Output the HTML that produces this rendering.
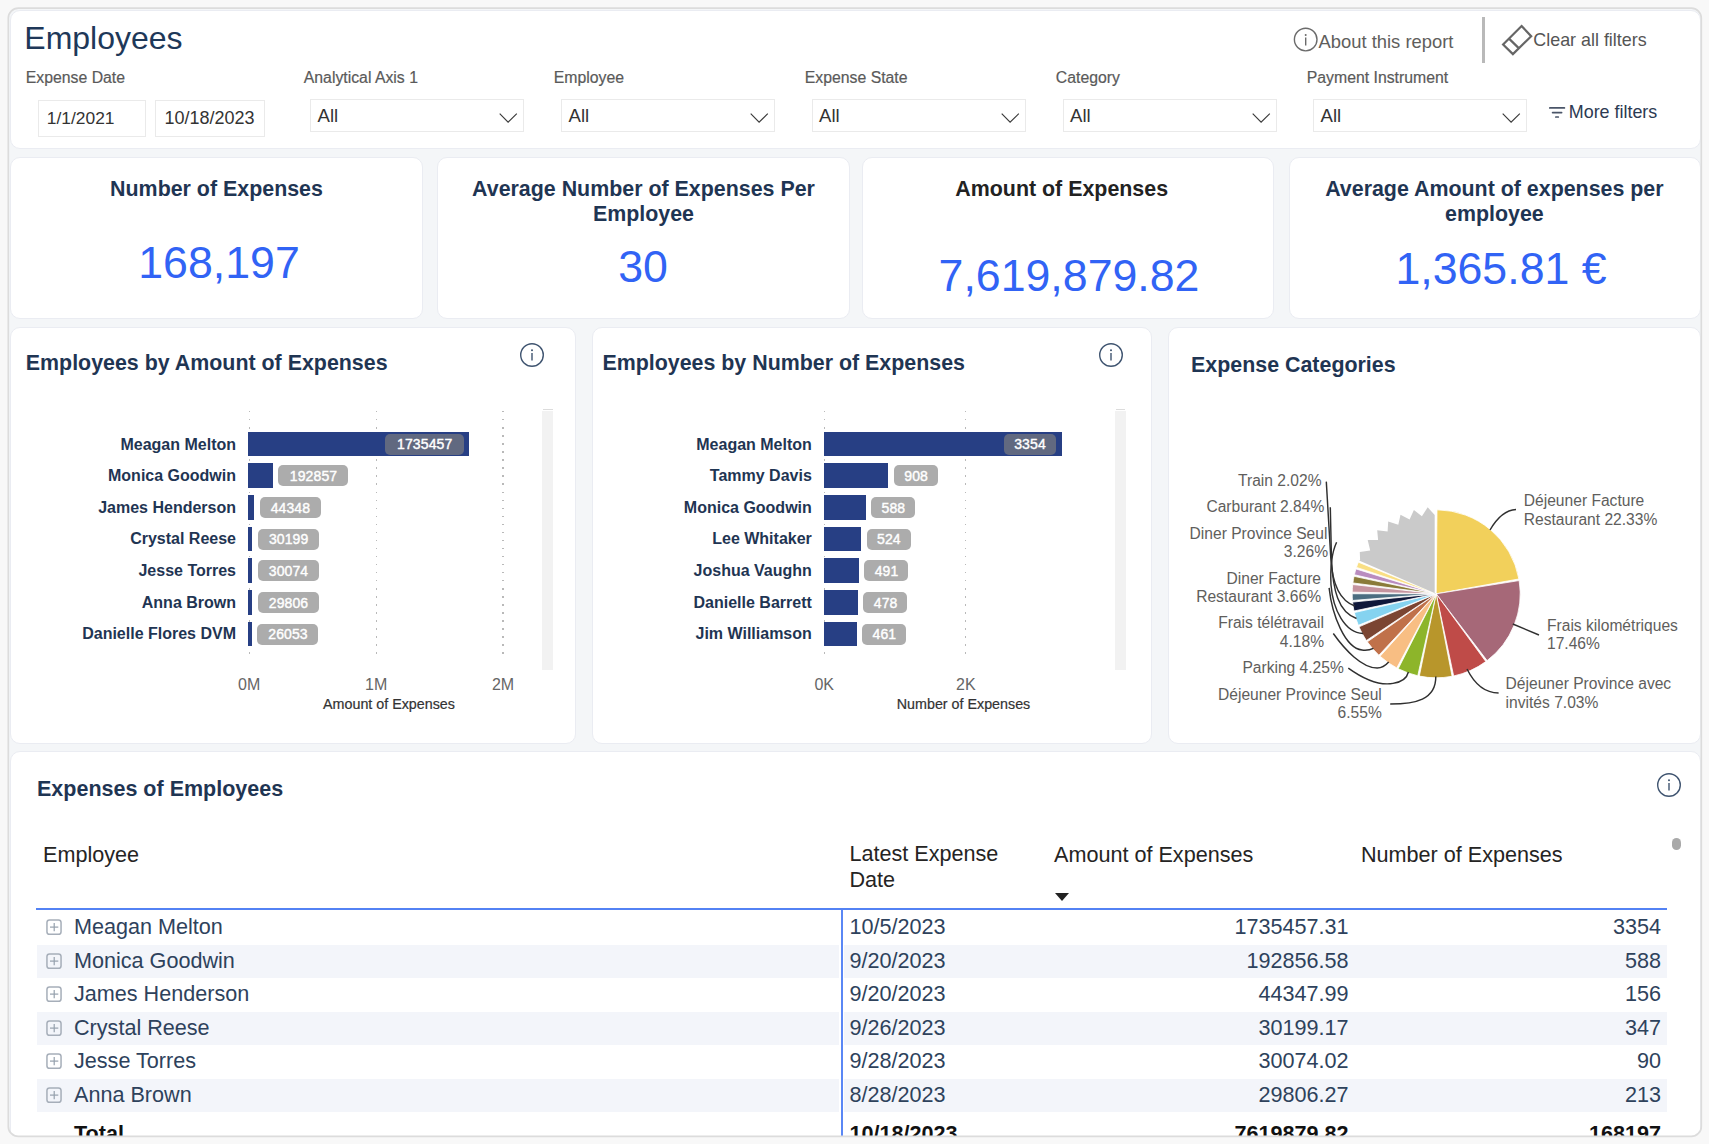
<!DOCTYPE html>
<html><head><meta charset="utf-8"><style>
html,body{margin:0;padding:0;}
body{width:1709px;height:1144px;position:relative;overflow:hidden;background:#f6f6f6;font-family:"Liberation Sans", sans-serif;}
.t{position:absolute;white-space:nowrap;line-height:1;}
</style></head><body>
<div style="position:absolute;left:8.0px;top:8.0px;width:1694.0px;height:1130.0px;background:#f4f6f8;border-radius:11px;"></div>
<div style="position:absolute;left:10.0px;top:10.0px;width:1691.0px;height:139.0px;background:#fff;border:1.5px solid #eaecf2;border-radius:10px;box-sizing:border-box;"></div>
<div style="position:absolute;left:10.0px;top:157.0px;width:413.0px;height:162.0px;background:#fff;border:1.5px solid #eaecf2;border-radius:10px;box-sizing:border-box;"></div>
<div style="position:absolute;left:437.0px;top:157.0px;width:413.0px;height:162.0px;background:#fff;border:1.5px solid #eaecf2;border-radius:10px;box-sizing:border-box;"></div>
<div style="position:absolute;left:862.0px;top:157.0px;width:412.0px;height:162.0px;background:#fff;border:1.5px solid #eaecf2;border-radius:10px;box-sizing:border-box;"></div>
<div style="position:absolute;left:1289.0px;top:157.0px;width:412.0px;height:162.0px;background:#fff;border:1.5px solid #eaecf2;border-radius:10px;box-sizing:border-box;"></div>
<div style="position:absolute;left:10.0px;top:327.0px;width:566.0px;height:417.0px;background:#fff;border:1.5px solid #eaecf2;border-radius:10px;box-sizing:border-box;"></div>
<div style="position:absolute;left:592.0px;top:327.0px;width:560.0px;height:417.0px;background:#fff;border:1.5px solid #eaecf2;border-radius:10px;box-sizing:border-box;"></div>
<div style="position:absolute;left:1168.0px;top:327.0px;width:533.0px;height:417.0px;background:#fff;border:1.5px solid #eaecf2;border-radius:10px;box-sizing:border-box;"></div>
<div style="position:absolute;left:10.0px;top:751.0px;width:1691.0px;height:399.0px;background:#fff;border:1.5px solid #eaecf2;border-radius:10px;box-sizing:border-box;"></div>
<div class="t" style="left:24.3px;top:21.9px;font-size:32px;color:#1e3859;font-weight:400;">Employees</div>
<div class="t" style="left:25.8px;top:69.6px;font-size:15.8px;color:#5a5a5a;font-weight:400;-webkit-text-stroke:0.2px #5a5a5a;">Expense Date</div>
<div class="t" style="left:303.8px;top:69.6px;font-size:15.8px;color:#5a5a5a;font-weight:400;-webkit-text-stroke:0.2px #5a5a5a;">Analytical Axis 1</div>
<div class="t" style="left:553.8px;top:69.6px;font-size:15.8px;color:#5a5a5a;font-weight:400;-webkit-text-stroke:0.2px #5a5a5a;">Employee</div>
<div class="t" style="left:804.8px;top:69.6px;font-size:15.8px;color:#5a5a5a;font-weight:400;-webkit-text-stroke:0.2px #5a5a5a;">Expense State</div>
<div class="t" style="left:1055.8px;top:69.6px;font-size:15.8px;color:#5a5a5a;font-weight:400;-webkit-text-stroke:0.2px #5a5a5a;">Category</div>
<div class="t" style="left:1306.8px;top:69.6px;font-size:15.8px;color:#5a5a5a;font-weight:400;-webkit-text-stroke:0.2px #5a5a5a;">Payment Instrument</div>
<div style="position:absolute;left:37.5px;top:99.5px;width:108.5px;height:37.5px;background:#fff;border:1.5px solid #eaeaea;box-sizing:border-box;"></div>
<div style="position:absolute;left:154.5px;top:99.5px;width:110.5px;height:37.5px;background:#fff;border:1.5px solid #eaeaea;box-sizing:border-box;"></div>
<div class="t" style="left:46.8px;top:109.7px;font-size:17.4px;color:#333;font-weight:400;">1/1/2021</div>
<div class="t" style="left:164.5px;top:109.4px;font-size:18px;color:#333;font-weight:400;">10/18/2023</div>
<div style="position:absolute;left:310.0px;top:99.0px;width:214.0px;height:33.0px;background:#fff;border:1.5px solid #eaeaea;box-sizing:border-box;"></div>
<div class="t" style="left:317.5px;top:107.0px;font-size:18.6px;color:#333;font-weight:400;">All</div>
<svg style="position:absolute;left:498px;top:112px" width="20" height="13"><polyline points="1.7,1.7 10.1,10.2 18.8,1.7" fill="none" stroke="#3a3a3a" stroke-width="1.15"/></svg>
<div style="position:absolute;left:561.0px;top:99.0px;width:214.0px;height:33.0px;background:#fff;border:1.5px solid #eaeaea;box-sizing:border-box;"></div>
<div class="t" style="left:568.5px;top:107.0px;font-size:18.6px;color:#333;font-weight:400;">All</div>
<svg style="position:absolute;left:749px;top:112px" width="20" height="13"><polyline points="1.7,1.7 10.1,10.2 18.8,1.7" fill="none" stroke="#3a3a3a" stroke-width="1.15"/></svg>
<div style="position:absolute;left:811.5px;top:99.0px;width:214.0px;height:33.0px;background:#fff;border:1.5px solid #eaeaea;box-sizing:border-box;"></div>
<div class="t" style="left:819.0px;top:107.0px;font-size:18.6px;color:#333;font-weight:400;">All</div>
<svg style="position:absolute;left:999.5px;top:112px" width="20" height="13"><polyline points="1.7,1.7 10.1,10.2 18.8,1.7" fill="none" stroke="#3a3a3a" stroke-width="1.15"/></svg>
<div style="position:absolute;left:1062.5px;top:99.0px;width:214.0px;height:33.0px;background:#fff;border:1.5px solid #eaeaea;box-sizing:border-box;"></div>
<div class="t" style="left:1070.0px;top:107.0px;font-size:18.6px;color:#333;font-weight:400;">All</div>
<svg style="position:absolute;left:1250.5px;top:112px" width="20" height="13"><polyline points="1.7,1.7 10.1,10.2 18.8,1.7" fill="none" stroke="#3a3a3a" stroke-width="1.15"/></svg>
<div style="position:absolute;left:1313.0px;top:99.0px;width:214.0px;height:33.0px;background:#fff;border:1.5px solid #eaeaea;box-sizing:border-box;"></div>
<div class="t" style="left:1320.5px;top:107.0px;font-size:18.6px;color:#333;font-weight:400;">All</div>
<svg style="position:absolute;left:1501px;top:112px" width="20" height="13"><polyline points="1.7,1.7 10.1,10.2 18.8,1.7" fill="none" stroke="#3a3a3a" stroke-width="1.15"/></svg>
<svg style="position:absolute;left:1290px;top:24px" width="32" height="32"><circle cx="15.7" cy="15.6" r="11.3" fill="none" stroke="#6b6b6b" stroke-width="1.4"/><circle cx="15.7" cy="11" r="1" fill="#6b6b6b"/><line x1="15.7" y1="13.6" x2="15.7" y2="21.5" stroke="#6b6b6b" stroke-width="1.4"/></svg>
<div class="t" style="left:1318.5px;top:32.5px;font-size:18.4px;color:#605e5c;font-weight:400;">About this report</div>
<div style="position:absolute;left:1482.4px;top:16.8px;width:2.9px;height:45.8px;background:#b9b9b9;"></div>
<svg style="position:absolute;left:1495px;top:20px" width="42" height="40"><path d="M26.6 6 L36.2 16.2 L17.9 34.1 L8.1 24.5 Z M14 18.6 L24 28.4" fill="none" stroke="#666" stroke-width="2.2" stroke-linejoin="miter"/></svg>
<div class="t" style="left:1533.3px;top:32.4px;font-size:17.9px;color:#555;font-weight:400;">Clear all filters</div>
<svg style="position:absolute;left:1546px;top:103px" width="22" height="18"><g stroke="#4a5568" stroke-width="1.7" stroke-linecap="round"><line x1="3.8" y1="4.9" x2="18.4" y2="4.9"/><line x1="6.6" y1="9.6" x2="15.6" y2="9.6"/><line x1="9.8" y1="14" x2="12.3" y2="14"/></g></svg>
<div class="t" style="left:1568.8px;top:104.4px;font-size:17.9px;color:#2c3a52;font-weight:400;">More filters</div>
<div class="t" style="left:216.5px;transform:translateX(-50%);top:178.9px;font-size:21.4px;color:#1f3553;font-weight:700;">Number of Expenses</div>
<div class="t" style="left:219.0px;transform:translateX(-50%);top:240.6px;font-size:44.7px;color:#3163f5;font-weight:400;">168,197</div>
<div class="t" style="left:643.5px;transform:translateX(-50%);top:178.9px;font-size:21.4px;color:#1f3553;font-weight:700;">Average Number of Expenses Per</div>
<div class="t" style="left:643.5px;transform:translateX(-50%);top:203.9px;font-size:21.4px;color:#1f3553;font-weight:700;">Employee</div>
<div class="t" style="left:643.0px;transform:translateX(-50%);top:245.2px;font-size:44.7px;color:#3163f5;font-weight:400;">30</div>
<div class="t" style="left:1061.7px;transform:translateX(-50%);top:178.9px;font-size:21.4px;color:#222;font-weight:700;">Amount of Expenses</div>
<div class="t" style="left:1069.0px;transform:translateX(-50%);top:253.5px;font-size:44.7px;color:#3163f5;font-weight:400;">7,619,879.82</div>
<div class="t" style="left:1494.4px;transform:translateX(-50%);top:178.9px;font-size:21.4px;color:#1f3553;font-weight:700;">Average Amount of expenses per</div>
<div class="t" style="left:1494.4px;transform:translateX(-50%);top:203.9px;font-size:21.4px;color:#1f3553;font-weight:700;">employee</div>
<div class="t" style="left:1501.0px;transform:translateX(-50%);top:246.9px;font-size:44.7px;color:#3163f5;font-weight:400;">1,365.81 €</div>
<div class="t" style="left:25.8px;top:352.7px;font-size:21.4px;color:#1f3553;font-weight:700;">Employees by Amount of Expenses</div>
<div style="position:absolute;left:248.5px;top:411.0px;width:1.4px;height:250.0px;background:repeating-linear-gradient(to bottom,#b9b9b9 0 1.4px,transparent 1.4px 8.05px);"></div>
<div style="position:absolute;left:375.5px;top:411.0px;width:1.4px;height:250.0px;background:repeating-linear-gradient(to bottom,#b9b9b9 0 1.4px,transparent 1.4px 8.05px);"></div>
<div style="position:absolute;left:502.3px;top:411.0px;width:1.4px;height:250.0px;background:repeating-linear-gradient(to bottom,#b9b9b9 0 1.4px,transparent 1.4px 8.05px);"></div>
<div style="position:absolute;left:542.6px;top:408.5px;width:10.0px;height:1.5px;background:#dcdcdc;"></div>
<div style="position:absolute;left:542.0px;top:411.2px;width:11.0px;height:258.8px;background:#f2f2f2;"></div>
<div style="position:absolute;left:248.1px;top:431.7px;width:221.1px;height:24.6px;background:#273f84;"></div>
<div class="t" style="right:1473.0px;top:436.5px;font-size:16px;color:#1f3553;font-weight:700;">Meagan Melton</div>
<div style="position:absolute;left:385.3px;top:433.6px;width:78.4px;height:21.0px;background:#616980;border-radius:5px;"></div>
<div class="t" style="left:424.7px;transform:translateX(-50%);top:437.2px;font-size:14px;color:#fff;font-weight:400;letter-spacing:0.1px;-webkit-text-stroke:0.4px #fff;">1735457</div>
<div style="position:absolute;left:248.1px;top:463.3px;width:25.0px;height:24.6px;background:#273f84;"></div>
<div class="t" style="right:1473.0px;top:468.1px;font-size:16px;color:#1f3553;font-weight:700;">Monica Goodwin</div>
<div style="position:absolute;left:278.4px;top:465.2px;width:69.8px;height:21.0px;background:#acacac;border-radius:5px;"></div>
<div class="t" style="left:313.5px;transform:translateX(-50%);top:468.9px;font-size:14px;color:#fff;font-weight:400;letter-spacing:0.1px;-webkit-text-stroke:0.4px #fff;">192857</div>
<div style="position:absolute;left:248.1px;top:495.0px;width:6.1px;height:24.6px;background:#273f84;"></div>
<div class="t" style="right:1473.0px;top:499.8px;font-size:16px;color:#1f3553;font-weight:700;">James Henderson</div>
<div style="position:absolute;left:259.5px;top:496.9px;width:61.2px;height:21.0px;background:#acacac;border-radius:5px;"></div>
<div class="t" style="left:290.4px;transform:translateX(-50%);top:500.5px;font-size:14px;color:#fff;font-weight:400;letter-spacing:0.1px;-webkit-text-stroke:0.4px #fff;">44348</div>
<div style="position:absolute;left:248.1px;top:526.6px;width:4.3px;height:24.6px;background:#273f84;"></div>
<div class="t" style="right:1473.0px;top:531.4px;font-size:16px;color:#1f3553;font-weight:700;">Crystal Reese</div>
<div style="position:absolute;left:257.7px;top:528.5px;width:61.2px;height:21.0px;background:#acacac;border-radius:5px;"></div>
<div class="t" style="left:288.6px;transform:translateX(-50%);top:532.2px;font-size:14px;color:#fff;font-weight:400;letter-spacing:0.1px;-webkit-text-stroke:0.4px #fff;">30199</div>
<div style="position:absolute;left:248.1px;top:558.3px;width:4.3px;height:24.6px;background:#273f84;"></div>
<div class="t" style="right:1473.0px;top:563.1px;font-size:16px;color:#1f3553;font-weight:700;">Jesse Torres</div>
<div style="position:absolute;left:257.7px;top:560.2px;width:61.2px;height:21.0px;background:#acacac;border-radius:5px;"></div>
<div class="t" style="left:288.5px;transform:translateX(-50%);top:563.8px;font-size:14px;color:#fff;font-weight:400;letter-spacing:0.1px;-webkit-text-stroke:0.4px #fff;">30074</div>
<div style="position:absolute;left:248.1px;top:590.0px;width:4.3px;height:24.6px;background:#273f84;"></div>
<div class="t" style="right:1473.0px;top:594.7px;font-size:16px;color:#1f3553;font-weight:700;">Anna Brown</div>
<div style="position:absolute;left:257.7px;top:591.9px;width:61.2px;height:21.0px;background:#acacac;border-radius:5px;"></div>
<div class="t" style="left:288.5px;transform:translateX(-50%);top:595.5px;font-size:14px;color:#fff;font-weight:400;letter-spacing:0.1px;-webkit-text-stroke:0.4px #fff;">29806</div>
<div style="position:absolute;left:248.1px;top:621.6px;width:3.8px;height:24.6px;background:#273f84;"></div>
<div class="t" style="right:1473.0px;top:626.4px;font-size:16px;color:#1f3553;font-weight:700;">Danielle Flores DVM</div>
<div style="position:absolute;left:257.2px;top:623.5px;width:61.2px;height:21.0px;background:#acacac;border-radius:5px;"></div>
<div class="t" style="left:288.0px;transform:translateX(-50%);top:627.1px;font-size:14px;color:#fff;font-weight:400;letter-spacing:0.1px;-webkit-text-stroke:0.4px #fff;">26053</div>
<div class="t" style="left:249.2px;transform:translateX(-50%);top:676.8px;font-size:16px;color:#666;font-weight:400;">0M</div>
<div class="t" style="left:376.2px;transform:translateX(-50%);top:676.8px;font-size:16px;color:#666;font-weight:400;">1M</div>
<div class="t" style="left:503.0px;transform:translateX(-50%);top:676.8px;font-size:16px;color:#666;font-weight:400;">2M</div>
<div class="t" style="left:389.0px;transform:translateX(-50%);top:697.1px;font-size:14.3px;color:#333;font-weight:400;-webkit-text-stroke:0.2px #333;">Amount of Expenses</div>
<svg style="position:absolute;left:518px;top:341.4px" width="28" height="28"><circle cx="14" cy="14" r="11.3" fill="none" stroke="#3f5470" stroke-width="1.4"/><circle cx="14" cy="9.3" r="1" fill="#3f5470"/><line x1="14" y1="12" x2="14" y2="19.5" stroke="#3f5470" stroke-width="1.4"/></svg>
<div class="t" style="left:602.4px;top:352.7px;font-size:21.4px;color:#1f3553;font-weight:700;">Employees by Number of Expenses</div>
<div style="position:absolute;left:823.5px;top:411.0px;width:1.4px;height:250.0px;background:repeating-linear-gradient(to bottom,#b9b9b9 0 1.4px,transparent 1.4px 8.05px);"></div>
<div style="position:absolute;left:965.1px;top:411.0px;width:1.4px;height:250.0px;background:repeating-linear-gradient(to bottom,#b9b9b9 0 1.4px,transparent 1.4px 8.05px);"></div>
<div style="position:absolute;left:1116.0px;top:408.5px;width:9.2px;height:1.5px;background:#dcdcdc;"></div>
<div style="position:absolute;left:1115.4px;top:411.2px;width:10.2px;height:258.8px;background:#f2f2f2;"></div>
<div style="position:absolute;left:823.7px;top:431.7px;width:238.0px;height:24.6px;background:#273f84;"></div>
<div class="t" style="right:897.2px;top:436.5px;font-size:16px;color:#1f3553;font-weight:700;">Meagan Melton</div>
<div style="position:absolute;left:1003.5px;top:433.6px;width:52.7px;height:21.0px;background:#616980;border-radius:5px;"></div>
<div class="t" style="left:1030.0px;transform:translateX(-50%);top:437.2px;font-size:14px;color:#fff;font-weight:400;letter-spacing:0.1px;-webkit-text-stroke:0.4px #fff;">3354</div>
<div style="position:absolute;left:823.7px;top:463.3px;width:64.8px;height:24.6px;background:#273f84;"></div>
<div class="t" style="right:897.2px;top:468.1px;font-size:16px;color:#1f3553;font-weight:700;">Tammy Davis</div>
<div style="position:absolute;left:893.8px;top:465.2px;width:44.1px;height:21.0px;background:#acacac;border-radius:5px;"></div>
<div class="t" style="left:916.1px;transform:translateX(-50%);top:468.9px;font-size:14px;color:#fff;font-weight:400;letter-spacing:0.1px;-webkit-text-stroke:0.4px #fff;">908</div>
<div style="position:absolute;left:823.7px;top:495.0px;width:42.1px;height:24.6px;background:#273f84;"></div>
<div class="t" style="right:897.2px;top:499.8px;font-size:16px;color:#1f3553;font-weight:700;">Monica Goodwin</div>
<div style="position:absolute;left:871.1px;top:496.9px;width:44.1px;height:21.0px;background:#acacac;border-radius:5px;"></div>
<div class="t" style="left:893.4px;transform:translateX(-50%);top:500.5px;font-size:14px;color:#fff;font-weight:400;letter-spacing:0.1px;-webkit-text-stroke:0.4px #fff;">588</div>
<div style="position:absolute;left:823.7px;top:526.6px;width:37.6px;height:24.6px;background:#273f84;"></div>
<div class="t" style="right:897.2px;top:531.4px;font-size:16px;color:#1f3553;font-weight:700;">Lee Whitaker</div>
<div style="position:absolute;left:866.6px;top:528.5px;width:44.1px;height:21.0px;background:#acacac;border-radius:5px;"></div>
<div class="t" style="left:888.9px;transform:translateX(-50%);top:532.2px;font-size:14px;color:#fff;font-weight:400;letter-spacing:0.1px;-webkit-text-stroke:0.4px #fff;">524</div>
<div style="position:absolute;left:823.7px;top:558.3px;width:35.3px;height:24.6px;background:#273f84;"></div>
<div class="t" style="right:897.2px;top:563.1px;font-size:16px;color:#1f3553;font-weight:700;">Joshua Vaughn</div>
<div style="position:absolute;left:864.3px;top:560.2px;width:44.1px;height:21.0px;background:#acacac;border-radius:5px;"></div>
<div class="t" style="left:886.5px;transform:translateX(-50%);top:563.8px;font-size:14px;color:#fff;font-weight:400;letter-spacing:0.1px;-webkit-text-stroke:0.4px #fff;">491</div>
<div style="position:absolute;left:823.7px;top:590.0px;width:34.3px;height:24.6px;background:#273f84;"></div>
<div class="t" style="right:897.2px;top:594.7px;font-size:16px;color:#1f3553;font-weight:700;">Danielle Barrett</div>
<div style="position:absolute;left:863.3px;top:591.9px;width:44.1px;height:21.0px;background:#acacac;border-radius:5px;"></div>
<div class="t" style="left:885.6px;transform:translateX(-50%);top:595.5px;font-size:14px;color:#fff;font-weight:400;letter-spacing:0.1px;-webkit-text-stroke:0.4px #fff;">478</div>
<div style="position:absolute;left:823.7px;top:621.6px;width:33.1px;height:24.6px;background:#273f84;"></div>
<div class="t" style="right:897.2px;top:626.4px;font-size:16px;color:#1f3553;font-weight:700;">Jim Williamson</div>
<div style="position:absolute;left:862.1px;top:623.5px;width:44.1px;height:21.0px;background:#acacac;border-radius:5px;"></div>
<div class="t" style="left:884.4px;transform:translateX(-50%);top:627.1px;font-size:14px;color:#fff;font-weight:400;letter-spacing:0.1px;-webkit-text-stroke:0.4px #fff;">461</div>
<div class="t" style="left:824.2px;transform:translateX(-50%);top:676.8px;font-size:16px;color:#666;font-weight:400;">0K</div>
<div class="t" style="left:965.8px;transform:translateX(-50%);top:676.8px;font-size:16px;color:#666;font-weight:400;">2K</div>
<div class="t" style="left:963.5px;transform:translateX(-50%);top:697.1px;font-size:14.3px;color:#333;font-weight:400;-webkit-text-stroke:0.2px #333;">Number of Expenses</div>
<svg style="position:absolute;left:1097.3px;top:341.4px" width="28" height="28"><circle cx="14" cy="14" r="11.3" fill="none" stroke="#3f5470" stroke-width="1.4"/><circle cx="14" cy="9.3" r="1" fill="#3f5470"/><line x1="14" y1="12" x2="14" y2="19.5" stroke="#3f5470" stroke-width="1.4"/></svg>
<div class="t" style="left:1191.1px;top:354.6px;font-size:21.4px;color:#1f3553;font-weight:700;">Expense Categories</div>
<svg style="position:absolute;left:1168px;top:327px" width="533" height="416" viewBox="1168 327 533 416"><path d="M1436.2,593.8 L1437.01,509.80 A84,84 0 0 1 1518.88,578.98 Z" fill="#F2D05B" stroke="#fff" stroke-width="0.8" stroke-linejoin="miter"/><path d="M1436.2,593.8 L1519.15,580.57 A84,84 0 0 1 1487.11,660.61 Z" fill="#A66878" stroke="#fff" stroke-width="0.8" stroke-linejoin="miter"/><path d="M1436.2,593.8 L1485.82,661.58 A84,84 0 0 1 1453.66,675.97 Z" fill="#BF4B48" stroke="#fff" stroke-width="0.8" stroke-linejoin="miter"/><path d="M1436.2,593.8 L1452.08,676.29 A84,84 0 0 1 1419.34,676.09 Z" fill="#B8962B" stroke="#fff" stroke-width="0.8" stroke-linejoin="miter"/><path d="M1436.2,593.8 L1417.76,675.75 A84,84 0 0 1 1398.22,668.72 Z" fill="#8DB52A" stroke="#fff" stroke-width="0.8" stroke-linejoin="miter"/><path d="M1436.2,593.8 L1396.79,667.98 A84,84 0 0 1 1380.07,656.29 Z" fill="#F8BE83" stroke="#fff" stroke-width="0.8" stroke-linejoin="miter"/><path d="M1436.2,593.8 L1378.88,655.20 A84,84 0 0 1 1367.30,641.85 Z" fill="#C0714A" stroke="#fff" stroke-width="0.8" stroke-linejoin="miter"/><path d="M1436.2,593.8 L1366.39,640.52 A84,84 0 0 1 1358.97,626.83 Z" fill="#7B4532" stroke="#fff" stroke-width="0.8" stroke-linejoin="miter"/><path d="M1436.2,593.8 L1358.35,625.35 A84,84 0 0 1 1354.33,612.60 Z" fill="#85D3F0" stroke="#fff" stroke-width="0.8" stroke-linejoin="miter"/><path d="M1436.2,593.8 L1353.99,611.03 A84,84 0 0 1 1352.61,602.09 Z" fill="#0F173A" stroke="#fff" stroke-width="0.8" stroke-linejoin="miter"/><path d="M1436.2,593.8 L1352.47,600.48 A84,84 0 0 1 1352.20,593.76 Z" fill="#4B6D80" stroke="#fff" stroke-width="0.8" stroke-linejoin="miter"/><path d="M1436.2,593.8 L1352.22,592.15 A84,84 0 0 1 1352.71,584.54 Z" fill="#C5949F" stroke="#fff" stroke-width="0.8" stroke-linejoin="miter"/><path d="M1436.2,593.8 L1352.90,582.94 A84,84 0 0 1 1354.04,576.32 Z" fill="#8A7B39" stroke="#fff" stroke-width="0.8" stroke-linejoin="miter"/><path d="M1436.2,593.8 L1354.39,574.74 A84,84 0 0 1 1355.97,568.91 Z" fill="#B98CBF" stroke="#fff" stroke-width="0.8" stroke-linejoin="miter"/><path d="M1436.2,593.8 L1356.46,567.38 A84,84 0 0 1 1358.39,562.16 Z" fill="#F9DF84" stroke="#fff" stroke-width="0.8" stroke-linejoin="miter"/><path d="M1436.2,593.8 L1359.0,560.6 L1360.1,560.2 L1359.8,552 L1370.2,550.5 L1367.7,540.1 L1378.1,540.1 L1377.2,530.3 L1387.6,531.5 L1388.2,521.4 L1398.3,524.8 L1400.5,514.7 L1409.6,519.6 L1413.9,510.1 L1421.9,516.2 L1427.7,507.3 L1434.7,515 L1434.7,594 Z" fill="#CACACA"/><path d="M1490,530 C1497,518 1505,510 1516,509.5" fill="none" stroke="#303030" stroke-width="1.45"/><path d="M1512.8,624 L1539,635" fill="none" stroke="#303030" stroke-width="1.45"/><path d="M1467,669 C1475,685 1485,693 1498.6,693" fill="none" stroke="#303030" stroke-width="1.45"/><path d="M1435.8,676.5 C1436,700 1415,704 1390.2,704" fill="none" stroke="#303030" stroke-width="1.45"/><path d="M1348.3,668.1 C1362,678 1378,686 1393,683.4 C1402,682 1407,678 1408.4,672" fill="none" stroke="#303030" stroke-width="1.45"/><path d="M1333.3,633.5 C1345,650 1362,668 1377.2,668 C1382,668 1386,665 1388.7,662" fill="none" stroke="#303030" stroke-width="1.45"/><path d="M1329.1,587.8 C1332,615 1345,648 1362,650 C1367,650.6 1370,650 1373.4,648.4" fill="none" stroke="#303030" stroke-width="1.45"/><path d="M1336.6,542.2 C1332,552 1330,565 1331,585 C1333,610 1345,633 1363,633.5" fill="none" stroke="#303030" stroke-width="1.45"/><path d="M1330.3,507.3 L1331.5,560 C1333,590 1338,612 1356.5,618.5" fill="none" stroke="#303030" stroke-width="1.45"/><path d="M1326.3,481.6 L1330.8,558 C1332,580 1338,600 1354.8,606" fill="none" stroke="#303030" stroke-width="1.45"/></svg>
<div class="t" style="right:387.5px;top:473.2px;font-size:15.6px;color:#605e5c;font-weight:400;">Train 2.02%</div>
<div class="t" style="right:384.7px;top:499.2px;font-size:15.6px;color:#605e5c;font-weight:400;">Carburant 2.84%</div>
<div class="t" style="right:381.6px;top:525.8px;font-size:15.6px;color:#605e5c;font-weight:400;">Diner Province Seul</div>
<div class="t" style="right:381.0px;top:544.0px;font-size:15.6px;color:#605e5c;font-weight:400;">3.26%</div>
<div class="t" style="right:388.0px;top:570.6px;font-size:15.6px;color:#605e5c;font-weight:400;">Diner Facture</div>
<div class="t" style="right:388.0px;top:588.8px;font-size:15.6px;color:#605e5c;font-weight:400;">Restaurant 3.66%</div>
<div class="t" style="right:385.1px;top:615.4px;font-size:15.6px;color:#605e5c;font-weight:400;">Frais télétravail</div>
<div class="t" style="right:385.0px;top:633.6px;font-size:15.6px;color:#605e5c;font-weight:400;">4.18%</div>
<div class="t" style="right:365.2px;top:659.5px;font-size:15.6px;color:#605e5c;font-weight:400;">Parking 4.25%</div>
<div class="t" style="right:327.2px;top:686.6px;font-size:15.6px;color:#605e5c;font-weight:400;">Déjeuner Province Seul</div>
<div class="t" style="right:327.2px;top:705.2px;font-size:15.6px;color:#605e5c;font-weight:400;">6.55%</div>
<div class="t" style="left:1523.8px;top:493.0px;font-size:15.6px;color:#605e5c;font-weight:400;">Déjeuner Facture</div>
<div class="t" style="left:1523.8px;top:511.6px;font-size:15.6px;color:#605e5c;font-weight:400;">Restaurant 22.33%</div>
<div class="t" style="left:1547.0px;top:617.5px;font-size:15.6px;color:#605e5c;font-weight:400;">Frais kilométriques</div>
<div class="t" style="left:1547.0px;top:636.0px;font-size:15.6px;color:#605e5c;font-weight:400;">17.46%</div>
<div class="t" style="left:1505.6px;top:676.4px;font-size:15.6px;color:#605e5c;font-weight:400;">Déjeuner Province avec</div>
<div class="t" style="left:1505.6px;top:695.0px;font-size:15.6px;color:#605e5c;font-weight:400;">invités 7.03%</div>
<div class="t" style="left:37.0px;top:778.8px;font-size:21.5px;color:#1f3553;font-weight:700;">Expenses of Employees</div>
<svg style="position:absolute;left:1655.4px;top:770.5px" width="28" height="28"><circle cx="14" cy="14" r="11.3" fill="none" stroke="#3f5470" stroke-width="1.4"/><circle cx="14" cy="9.3" r="1" fill="#3f5470"/><line x1="14" y1="12" x2="14" y2="19.5" stroke="#3f5470" stroke-width="1.4"/></svg>
<div style="position:absolute;left:1671.6px;top:838.0px;width:9.4px;height:12.0px;background:#a9a9a9;border-radius:5px;"></div>
<div class="t" style="left:43.0px;top:844.0px;font-size:21.6px;color:#252423;font-weight:400;">Employee</div>
<div class="t" style="left:849.5px;top:843.2px;font-size:21.6px;color:#252423;font-weight:400;">Latest Expense</div>
<div class="t" style="left:849.5px;top:868.7px;font-size:21.6px;color:#252423;font-weight:400;">Date</div>
<div class="t" style="left:1054.0px;top:843.9px;font-size:21.6px;color:#252423;font-weight:400;">Amount of Expenses</div>
<div class="t" style="left:1361.0px;top:843.9px;font-size:21.6px;color:#252423;font-weight:400;">Number of Expenses</div>
<svg style="position:absolute;left:1054px;top:892px" width="17" height="10"><polygon points="1,1 15,1 8,9" fill="#222"/></svg>
<svg style="position:absolute;left:44px;top:917.3px" width="20" height="20"><rect x="2.95" y="2.95" width="14.1" height="14.3" rx="2.6" fill="none" stroke="#a6aeb9" stroke-width="1.5"/><line x1="6" y1="10.1" x2="14.3" y2="10.1" stroke="#95a0ad" stroke-width="1.2"/><line x1="10.2" y1="6" x2="10.2" y2="14.3" stroke="#95a0ad" stroke-width="1.2"/></svg>
<div class="t" style="left:74.0px;top:916.1px;font-size:21.6px;color:#2e425c;font-weight:400;">Meagan Melton</div>
<div class="t" style="left:849.5px;top:916.1px;font-size:21.6px;color:#2e425c;font-weight:400;">10/5/2023</div>
<div class="t" style="right:360.5px;top:916.1px;font-size:21.6px;color:#2e425c;font-weight:400;">1735457.31</div>
<div class="t" style="right:48.0px;top:916.1px;font-size:21.6px;color:#2e425c;font-weight:400;">3354</div>
<div style="position:absolute;left:37.0px;top:944.8px;width:802.0px;height:32.8px;background:#f3f5fa;"></div>
<div style="position:absolute;left:844.2px;top:944.8px;width:822.8px;height:32.8px;background:#f3f5fa;"></div>
<svg style="position:absolute;left:44px;top:950.8px" width="20" height="20"><rect x="2.95" y="2.95" width="14.1" height="14.3" rx="2.6" fill="none" stroke="#a6aeb9" stroke-width="1.5"/><line x1="6" y1="10.1" x2="14.3" y2="10.1" stroke="#95a0ad" stroke-width="1.2"/><line x1="10.2" y1="6" x2="10.2" y2="14.3" stroke="#95a0ad" stroke-width="1.2"/></svg>
<div class="t" style="left:74.0px;top:949.6px;font-size:21.6px;color:#2e425c;font-weight:400;">Monica Goodwin</div>
<div class="t" style="left:849.5px;top:949.6px;font-size:21.6px;color:#2e425c;font-weight:400;">9/20/2023</div>
<div class="t" style="right:360.5px;top:949.6px;font-size:21.6px;color:#2e425c;font-weight:400;">192856.58</div>
<div class="t" style="right:48.0px;top:949.6px;font-size:21.6px;color:#2e425c;font-weight:400;">588</div>
<svg style="position:absolute;left:44px;top:984.3px" width="20" height="20"><rect x="2.95" y="2.95" width="14.1" height="14.3" rx="2.6" fill="none" stroke="#a6aeb9" stroke-width="1.5"/><line x1="6" y1="10.1" x2="14.3" y2="10.1" stroke="#95a0ad" stroke-width="1.2"/><line x1="10.2" y1="6" x2="10.2" y2="14.3" stroke="#95a0ad" stroke-width="1.2"/></svg>
<div class="t" style="left:74.0px;top:983.1px;font-size:21.6px;color:#2e425c;font-weight:400;">James Henderson</div>
<div class="t" style="left:849.5px;top:983.1px;font-size:21.6px;color:#2e425c;font-weight:400;">9/20/2023</div>
<div class="t" style="right:360.5px;top:983.1px;font-size:21.6px;color:#2e425c;font-weight:400;">44347.99</div>
<div class="t" style="right:48.0px;top:983.1px;font-size:21.6px;color:#2e425c;font-weight:400;">156</div>
<div style="position:absolute;left:37.0px;top:1011.8px;width:802.0px;height:32.8px;background:#f3f5fa;"></div>
<div style="position:absolute;left:844.2px;top:1011.8px;width:822.8px;height:32.8px;background:#f3f5fa;"></div>
<svg style="position:absolute;left:44px;top:1017.8px" width="20" height="20"><rect x="2.95" y="2.95" width="14.1" height="14.3" rx="2.6" fill="none" stroke="#a6aeb9" stroke-width="1.5"/><line x1="6" y1="10.1" x2="14.3" y2="10.1" stroke="#95a0ad" stroke-width="1.2"/><line x1="10.2" y1="6" x2="10.2" y2="14.3" stroke="#95a0ad" stroke-width="1.2"/></svg>
<div class="t" style="left:74.0px;top:1016.6px;font-size:21.6px;color:#2e425c;font-weight:400;">Crystal Reese</div>
<div class="t" style="left:849.5px;top:1016.6px;font-size:21.6px;color:#2e425c;font-weight:400;">9/26/2023</div>
<div class="t" style="right:360.5px;top:1016.6px;font-size:21.6px;color:#2e425c;font-weight:400;">30199.17</div>
<div class="t" style="right:48.0px;top:1016.6px;font-size:21.6px;color:#2e425c;font-weight:400;">347</div>
<svg style="position:absolute;left:44px;top:1051.3px" width="20" height="20"><rect x="2.95" y="2.95" width="14.1" height="14.3" rx="2.6" fill="none" stroke="#a6aeb9" stroke-width="1.5"/><line x1="6" y1="10.1" x2="14.3" y2="10.1" stroke="#95a0ad" stroke-width="1.2"/><line x1="10.2" y1="6" x2="10.2" y2="14.3" stroke="#95a0ad" stroke-width="1.2"/></svg>
<div class="t" style="left:74.0px;top:1050.1px;font-size:21.6px;color:#2e425c;font-weight:400;">Jesse Torres</div>
<div class="t" style="left:849.5px;top:1050.1px;font-size:21.6px;color:#2e425c;font-weight:400;">9/28/2023</div>
<div class="t" style="right:360.5px;top:1050.1px;font-size:21.6px;color:#2e425c;font-weight:400;">30074.02</div>
<div class="t" style="right:48.0px;top:1050.1px;font-size:21.6px;color:#2e425c;font-weight:400;">90</div>
<div style="position:absolute;left:37.0px;top:1078.8px;width:802.0px;height:32.8px;background:#f3f5fa;"></div>
<div style="position:absolute;left:844.2px;top:1078.8px;width:822.8px;height:32.8px;background:#f3f5fa;"></div>
<svg style="position:absolute;left:44px;top:1084.8px" width="20" height="20"><rect x="2.95" y="2.95" width="14.1" height="14.3" rx="2.6" fill="none" stroke="#a6aeb9" stroke-width="1.5"/><line x1="6" y1="10.1" x2="14.3" y2="10.1" stroke="#95a0ad" stroke-width="1.2"/><line x1="10.2" y1="6" x2="10.2" y2="14.3" stroke="#95a0ad" stroke-width="1.2"/></svg>
<div class="t" style="left:74.0px;top:1083.6px;font-size:21.6px;color:#2e425c;font-weight:400;">Anna Brown</div>
<div class="t" style="left:849.5px;top:1083.6px;font-size:21.6px;color:#2e425c;font-weight:400;">8/28/2023</div>
<div class="t" style="right:360.5px;top:1083.6px;font-size:21.6px;color:#2e425c;font-weight:400;">29806.27</div>
<div class="t" style="right:48.0px;top:1083.6px;font-size:21.6px;color:#2e425c;font-weight:400;">213</div>
<div class="t" style="left:74.0px;top:1122.7px;font-size:21.6px;color:#111;font-weight:700;">Total</div>
<div class="t" style="left:849.5px;top:1122.7px;font-size:21.6px;color:#111;font-weight:700;">10/18/2023</div>
<div class="t" style="right:360.5px;top:1122.7px;font-size:21.6px;color:#111;font-weight:700;">7619879.82</div>
<div class="t" style="right:48.0px;top:1122.7px;font-size:21.6px;color:#111;font-weight:700;">168197</div>
<div style="position:absolute;left:36.4px;top:908.3px;width:1630.6px;height:1.8px;background:#5382f4;"></div>
<div style="position:absolute;left:841.1px;top:910.0px;width:1.6px;height:228.0px;background:#5a87f5;"></div>
<svg style="position:absolute;left:0;top:0" width="1709" height="1144"><path fill-rule="evenodd" fill="#f8f8f8" d="M0,0 H1709 V1144 H0 Z M18.5,8.5 H1691.5 A10,10 0 0 1 1701.5,18.5 V1126.5 A10,10 0 0 1 1691.5,1136.5 H18.5 A10,10 0 0 1 8.5,1126.5 V18.5 A10,10 0 0 1 18.5,8.5 Z"/><rect x="8.3" y="8.2" width="1693" height="1128.2" rx="10" fill="none" stroke="#dcdcdc" stroke-width="1.7"/></svg>
</body></html>
